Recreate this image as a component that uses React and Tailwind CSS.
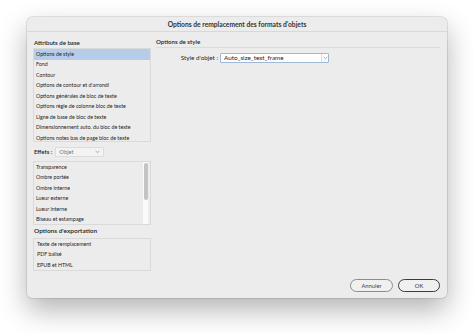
import React from "react";

const font = { fontFamily: "Lato, 'Noto Sans', sans-serif" };

function Row({ children, selected }) {
  return (
    <div
      className={`h-[10.5px] flex items-center pl-[2px] text-[5.3px] text-[#262626] leading-none ${
        selected ? "bg-[#b6cdea]" : ""
      }`}
    >
      {children}
    </div>
  );
}

function Chevron({ className }) {
  return (
    <svg viewBox="0 0 8 5" className={className} fill="none">
      <path d="M1.5 1.2 L4 3.6 L6.5 1.2" stroke="#6b6b6b" strokeWidth="0.9" strokeLinecap="round" strokeLinejoin="round" />
    </svg>
  );
}

export default function App() {
  return (
    <div className="w-[474px] h-[334px] bg-white overflow-hidden pt-[17px] pl-[27px]" style={font}>
      <div className="w-[420px] h-[281px] bg-[#ececec] rounded-[5px] flex flex-col shadow-[0_12px_28px_rgba(0,0,0,0.3),0_0_0_0.5px_rgba(0,0,0,0.18)]">
        {/* title bar */}
        <div className="h-[15px] shrink-0 border-b border-[#d8d8d8] flex items-center justify-center text-[6.7px] font-bold text-[#333]">
          Options de remplacement des formats d'objets
        </div>

        {/* body */}
        <div className="flex h-[239px] pl-[6px] pr-[7px] gap-[5px]">
          {/* left column */}
          <div className="w-[118px] shrink-0 flex flex-col">
            <div className="h-[16px] pt-[6px] flex items-center text-[6.1px] font-semibold text-[#222] leading-none pl-[1px]">
              Attributs de base
            </div>
            <div className="h-[94px] border border-[#dadada] bg-[#ececec] overflow-hidden">
              <Row selected>Options de style</Row>
              <Row>Fond</Row>
              <Row>Contour</Row>
              <Row>Options de contour et d'arrondi</Row>
              <Row>Options générales de bloc de texte</Row>
              <Row>Options règle de colonne bloc de texte</Row>
              <Row>Ligne de base de bloc de texte</Row>
              <Row>Dimensionnement auto. du bloc de texte</Row>
              <Row>Options notes bas de page bloc de texte</Row>
            </div>

            <div className="h-[19px] flex items-center gap-[3px] pl-[1px]">
              <span className="text-[6px] font-semibold text-[#222] leading-none">Effets :</span>
              <div className="w-[49px] h-[10px] bg-[#f3f3f3] border border-[#dcdcdc] rounded-[1px] flex items-center justify-between px-[3px]">
                <span className="text-[5.8px] text-[#777] leading-none">Objet</span>
                <Chevron className="w-[5px] h-[4px]" />
              </div>
            </div>

            <div className="h-[64px] border border-[#dadada] bg-[#ececec] flex">
              <div className="flex-1">
                <Row>Transparence</Row>
                <Row>Ombre portée</Row>
                <Row>Ombre interne</Row>
                <Row>Lueur externe</Row>
                <Row>Lueur interne</Row>
                <Row>Biseau et estampage</Row>
              </div>
              <div className="w-[5px] mr-[2px] bg-[#fafafa] flex flex-col">
                <div className="h-[37px] mt-[1px] mx-[0.5px] rounded-full bg-[#c4c4c4]" />
              </div>
            </div>

            <div className="h-[13px] flex items-center text-[6.5px] font-semibold text-[#222] leading-none pl-[1px]">
              Options d'exportation
            </div>
            <div className="h-[33px] border border-[#dadada] bg-[#ececec] pl-[1px]">
              <Row>Texte de remplacement</Row>
              <Row>PDF balisé</Row>
              <Row>EPUB et HTML</Row>
            </div>
          </div>

          {/* right column */}
          <div className="flex-1 flex flex-col">
            <div className="h-[16px] pt-[6px] flex items-center border-b border-[#dcdcdc] text-[6.1px] font-semibold text-[#222] leading-none">
              Options de style
            </div>
            <div className="mt-[5px] h-[10px] flex items-center gap-[2px]">
              <span className="w-[62px] text-right text-[6.3px] text-[#2a2a2a] leading-none">Style d'objet :</span>
              <div className="w-[109px] h-[10px] bg-white border border-[#9fb7d9] rounded-[1px] flex items-center">
                <span className="flex-1 pl-[3px] text-[6.3px] text-[#222] leading-none">Auto_size_text_frame</span>
                <div className="w-[7px] h-full border-l border-[#dedede] flex items-center justify-center">
                  <Chevron className="w-[5px] h-[4px]" />
                </div>
              </div>
            </div>
          </div>
        </div>

        {/* footer */}
        <div className="mt-[8px] h-[13px] flex justify-end gap-[5px] pr-[7px]">
          <div className="w-[43px] h-[13px] rounded-full border border-[#8c8c8c] bg-[#f0f0f0] flex items-center justify-center text-[5.8px] text-[#444] leading-none">
            Annuler
          </div>
          <div className="w-[42px] h-[13px] rounded-full border-[1.3px] border-[#3c3c3c] bg-[#f0f0f0] flex items-center justify-center text-[5.8px] text-[#333] leading-none">
            OK
          </div>
        </div>
      </div>
    </div>
  );
}
